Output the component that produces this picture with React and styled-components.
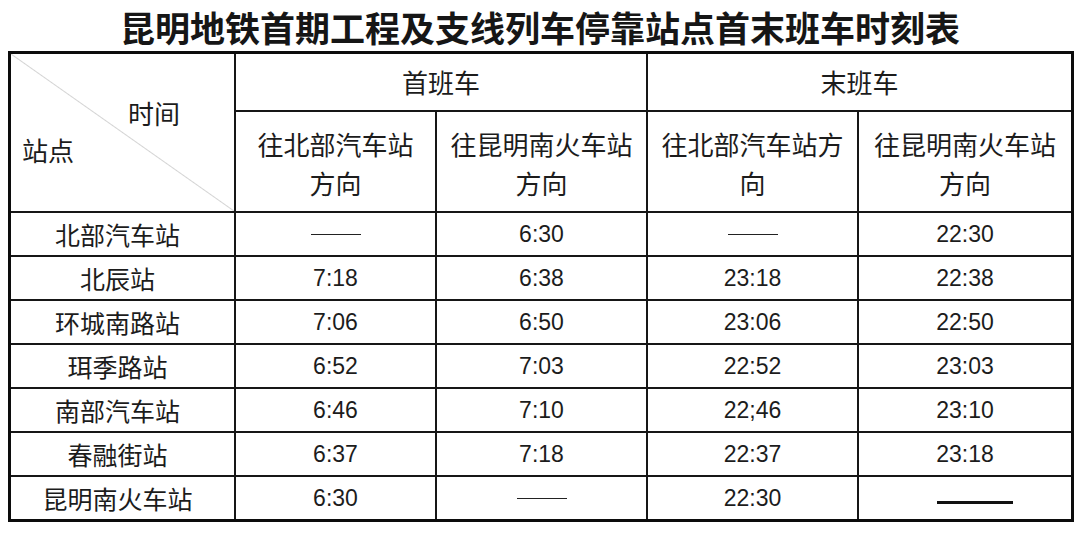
import styled, { createGlobalStyle } from 'styled-components'

const GlobalStyle = createGlobalStyle`
  body {
    margin: 0;
    background: #fff;
    font-family: "Noto Sans CJK SC", sans-serif;
    color: #1c1c1c;
  }
`

const Page = styled.div`
  width: 1080px;
  height: 536px;
  overflow: hidden;
  background: #fff;
`

const Titulo = styled.h1`
  margin: 0;
  padding-top: 4px;
  height: 47px;
  line-height: 45px;
  text-align: center;
  font-size: 35px;
  font-weight: 700;
  color: #161616;
`

const Tabela = styled.div`
  margin-left: 8px;
  width: 1060px;
  display: grid;
  grid-template-columns: 223px 199px 209px 209px 212px;
  grid-template-rows: 56px 99px repeat(7, 42px);
  gap: 2px;
  background: #161616;
  border: 3px solid #0c0c0c;
`

const Celula = styled.div`
  background: #fff;
  display: flex;
  align-items: center;
  justify-content: center;
  text-align: center;
  padding-right: ${p => (p.$estacao ? '10px' : '0')};
  font-size: ${p => (p.$num ? '23px' : '25px')};
  font-family: ${p => (p.$num ? '"Liberation Sans", "Noto Sans CJK SC", sans-serif' : '"Noto Sans CJK SC", sans-serif')};
  font-weight: 400;
  line-height: 1;
`

const CantoDiagonal = styled.div`
  grid-row: span 2;
  display: flex;
  flex-direction: column;
  padding-top: 44px;
  font-size: 26px;
  line-height: 30px;
  background: linear-gradient(
    to top right,
    #fff calc(50% - 1px),
    #d4d4d4 50%,
    #fff calc(50% + 1px)
  );
`

const Rotulo = styled.span`
  margin-left: ${p => p.$left}px;
  margin-top: ${p => p.$top || 0}px;
`

const Grupo = styled(Celula)`
  grid-column: span 2;
  font-size: 26px;
`

const Direcao = styled(Celula)`
  flex-direction: column;
  font-size: 26px;
  line-height: 39px;
  padding-top: 2px;
`

const Traco = styled.span`
  display: inline-block;
  width: 50px;
  height: 0;
  border-top: 1.5px solid #222;
`

const TracoGrosso = styled.span`
  display: inline-block;
  width: 76px;
  height: 0;
  border-top: 3px solid #111;
  margin-left: 20px;
  margin-top: 8px;
`

const linhas = [
  ['北部汽车站', '-', '6:30', '-', '22:30'],
  ['北辰站', '7:18', '6:38', '23:18', '22:38'],
  ['环城南路站', '7:06', '6:50', '23:06', '22:50'],
  ['珥季路站', '6:52', '7:03', '22:52', '23:03'],
  ['南部汽车站', '6:46', '7:10', '22;46', '23:10'],
  ['春融街站', '6:37', '7:18', '22:37', '23:18'],
  ['昆明南火车站', '6:30', '-', '22:30', '='],
]

const direcoes = [
  ['往北部汽车站', '方向'],
  ['往昆明南火车站', '方向'],
  ['往北部汽车站方', '向'],
  ['往昆明南火车站', '方向'],
]

const App = () => {
  return (
    <>
      <GlobalStyle />
      <Page>
        <Titulo>昆明地铁首期工程及支线列车停靠站点首末班车时刻表</Titulo>
        <Tabela>
          <CantoDiagonal>
            <Rotulo $left={117}>时间</Rotulo>
            <Rotulo $left={11} $top={7}>站点</Rotulo>
          </CantoDiagonal>
          <Grupo>首班车</Grupo>
          <Grupo>末班车</Grupo>
          {direcoes.map((d, i) => (
            <Direcao key={i}>
              <span>{d[0]}</span>
              <span>{d[1]}</span>
            </Direcao>
          ))}
          {linhas.map((l, i) =>
            l.map((v, j) => (
              <Celula key={i + '-' + j} $num={j > 0} $estacao={j === 0}>
                {v === '-' ? <Traco /> : v === '=' ? <TracoGrosso /> : v}
              </Celula>
            ))
          )}
        </Tabela>
      </Page>
    </>
  )
}

export default App
